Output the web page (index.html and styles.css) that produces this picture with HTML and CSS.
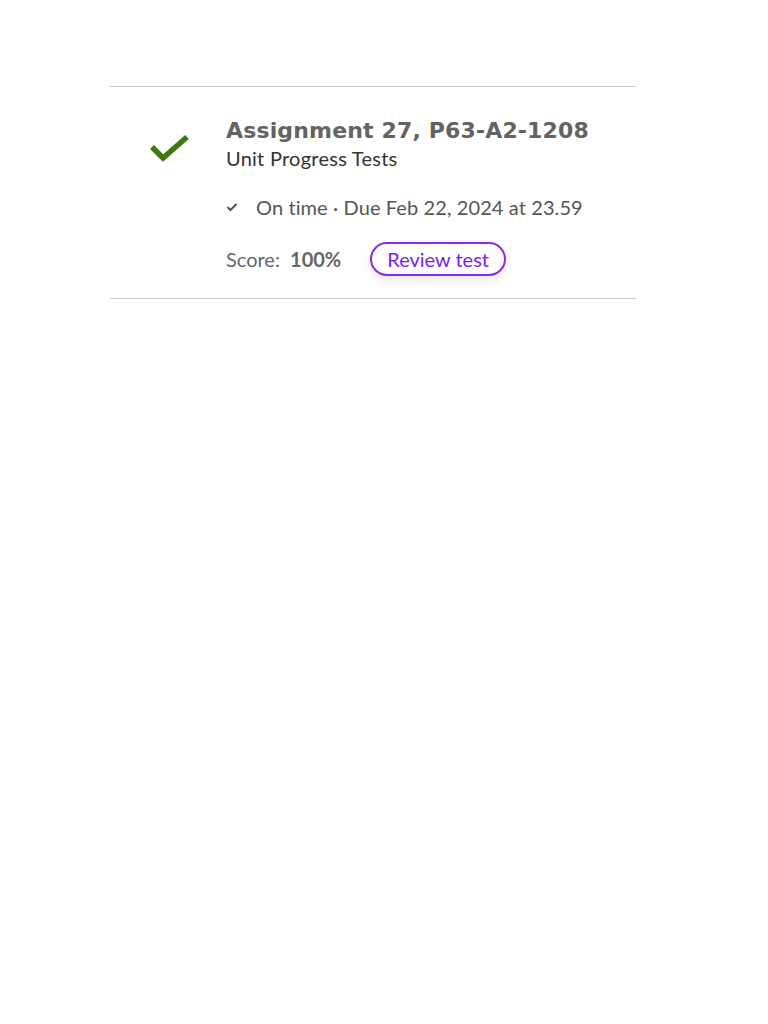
FILE: index.html
```html
<!DOCTYPE html>
<html>
<head>
<meta charset="utf-8">
<link rel="stylesheet" href="styles.css">
</head>
<body>
<div class="page">
  <div class="item">
    <div class="status">
      <svg width="42" height="28" viewBox="0 0 42 28"><path d="M3 13 L14 24 L38 3" fill="none" stroke="#3d7a0d" stroke-width="5.5" stroke-linejoin="miter"/></svg>
    </div>
    <div class="content">
      <div class="title">Assignment 27, P63-A2-1208</div>
      <div class="subtitle">Unit Progress Tests</div>
      <div class="due">
        <svg class="tick" width="12" height="10" viewBox="0 0 12 10"><path d="M1.5 5 L4.5 8 L10.5 2" fill="none" stroke="#555" stroke-width="2"/></svg>
        <span>On time · Due Feb 22, 2024 at 23.59</span>
      </div>
      <div class="score-row">
        <span class="score">Score: <b>100%</b></span>
        <button class="review">Review test</button>
      </div>
    </div>
  </div>
</div>
</body>
</html>
```

FILE: styles.css
```css
html, body { margin: 0; padding: 0; background: #fff; }
body { font-family: Lato, "Noto Sans", sans-serif; }
.page { padding: 86px 0 0 110px; }
.item {
  width: 526px;
  height: 213px;
  box-sizing: border-box;
  border-top: 1px solid #c8c8c8;
  border-bottom: 1px solid #c8c8c8;
  display: flex;
  padding-top: 30px;
}
.status { width: 116px; display: flex; justify-content: center; padding-top: 17px; padding-left: 4px; box-sizing: border-box; }
.status svg { display: block; }
.content { display: flex; flex-direction: column; }
.title { font-family: "DejaVu Sans", sans-serif; font-weight: bold; font-size: 22px; color: #636363; line-height: 28px; letter-spacing: 0.15px; }
.subtitle { font-size: 20px; color: #333; line-height: 24px; margin-top: 1px; letter-spacing: 0.25px; }
.due { display: flex; align-items: center; margin-top: 25px; color: #555; font-size: 20px; line-height: 24px; letter-spacing: 0.1px; }
.tick { margin-right: 18px; }
.score-row { display: flex; align-items: center; margin-top: 23px; }
.score { font-size: 20px; color: #666; }
.score b { font-weight: bold; color: #666; margin-left: 5px; }
.review {
  margin-left: 29px;
  border: 2px solid #8a2be2;
  border-radius: 18px;
  background: #fff;
  color: #7a1ee6;
  font-family: Lato, "Noto Sans", sans-serif;
  font-size: 20px;
  padding: 5px 15px;
  line-height: 20px;
  height: 34px;
  box-shadow: 0 4px 10px rgba(0,0,0,0.1);
}
```
